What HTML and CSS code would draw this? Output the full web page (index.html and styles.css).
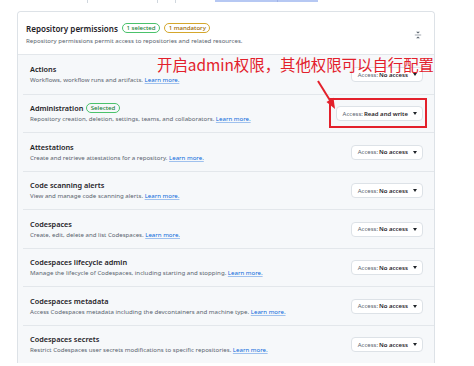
FILE: index.html
```html
<!DOCTYPE html>
<html lang="en">
<head>
<meta charset="utf-8">
<title>Repository permissions</title>
<link rel="stylesheet" href="styles.css">
</head>
<body>
<div class="topstrip">
  <span class="tick t1"></span>
  <span class="tick t2"></span>
  <span class="tick t3"></span>
  <span class="bluebar"><span class="bluediv"></span></span>
</div>
<div class="panel">
  <div class="panel-header">
    <div class="head-text">
      <div class="head-title">
        <span class="title-main">Repository permissions</span>
        <span class="badge badge-green">1 selected</span>
        <span class="badge badge-orange">1 mandatory</span>
      </div>
      <div class="head-desc">Repository permissions permit access to repositories and related resources.</div>
    </div>
    <svg class="fold" viewBox="0 0 10 12" width="8" height="10" aria-hidden="true">
      <path d="M5 4.2 L2.6 1.8 H7.4 Z" fill="#59636e"/>
      <rect x="1" y="5.5" width="8" height="1" fill="#8c959f"/>
      <path d="M5 7.8 L2.6 10.2 H7.4 Z" fill="#59636e"/>
    </svg>
  </div>
  <div class="rows">
    <div class="row">
      <div class="row-text">
        <div class="row-title">Actions</div>
        <div class="row-desc">Workflows, workflow runs and artifacts. <a class="learn">Learn more.</a></div>
      </div>
      <div class="select"><span class="lbl">Access:</span> <b>No access</b><span class="caret"></span></div>
    </div>
    <div class="row">
      <div class="row-text">
        <div class="row-title">Administration <span class="badge badge-green sel">Selected</span></div>
        <div class="row-desc">Repository creation, deletion, settings, teams, and collaborators. <a class="learn">Learn more.</a></div>
      </div>
      <div class="select"><span class="lbl">Access:</span> <b>Read and write</b><span class="caret"></span></div>
    </div>
    <div class="row">
      <div class="row-text">
        <div class="row-title">Attestations</div>
        <div class="row-desc">Create and retrieve attestations for a repository. <a class="learn">Learn more.</a></div>
      </div>
      <div class="select"><span class="lbl">Access:</span> <b>No access</b><span class="caret"></span></div>
    </div>
    <div class="row">
      <div class="row-text">
        <div class="row-title">Code scanning alerts</div>
        <div class="row-desc">View and manage code scanning alerts. <a class="learn">Learn more.</a></div>
      </div>
      <div class="select"><span class="lbl">Access:</span> <b>No access</b><span class="caret"></span></div>
    </div>
    <div class="row">
      <div class="row-text">
        <div class="row-title">Codespaces</div>
        <div class="row-desc">Create, edit, delete and list Codespaces. <a class="learn">Learn more.</a></div>
      </div>
      <div class="select"><span class="lbl">Access:</span> <b>No access</b><span class="caret"></span></div>
    </div>
    <div class="row">
      <div class="row-text">
        <div class="row-title">Codespaces lifecycle admin</div>
        <div class="row-desc">Manage the lifecycle of Codespaces, including starting and stopping. <a class="learn">Learn more.</a></div>
      </div>
      <div class="select"><span class="lbl">Access:</span> <b>No access</b><span class="caret"></span></div>
    </div>
    <div class="row">
      <div class="row-text">
        <div class="row-title">Codespaces metadata</div>
        <div class="row-desc">Access Codespaces metadata including the devcontainers and machine type. <a class="learn">Learn more.</a></div>
      </div>
      <div class="select"><span class="lbl">Access:</span> <b>No access</b><span class="caret"></span></div>
    </div>
    <div class="row">
      <div class="row-text">
        <div class="row-title">Codespaces secrets</div>
        <div class="row-desc">Restrict Codespaces user secrets modifications to specific repositories. <a class="learn">Learn more.</a></div>
      </div>
      <div class="select"><span class="lbl">Access:</span> <b>No access</b><span class="caret"></span></div>
    </div>
  </div>
</div>

<div class="note">开启admin权限，其他权限可以自行配置</div>
<svg class="arrow" width="474" height="366" viewBox="0 0 474 366" aria-hidden="true">
  <line x1="318" y1="81" x2="331" y2="102" stroke="#e3202b" stroke-width="2"/>
  <path d="M335 109 L326.5 102 L333.5 97.8 Z" fill="#e3202b"/>
</svg>
<div class="redbox"></div>
</body>
</html>
```
FILE: styles.css
```css
html, body {
  margin: 0;
  padding: 0;
  background: #ffffff;
}
body {
  width: 474px;
  height: 366px;
  overflow: hidden;
  position: relative;
  font-family: "Noto Sans", "Open Sans", sans-serif;
  color: #1f2328;
}
.topstrip {
  height: 3px;
  display: flex;
  align-items: flex-start;
}
.tick {
  display: block;
  width: 1px;
  height: 3px;
  background: #d0d7de;
}
.t1 { margin-left: 87px; }
.t2 { margin-left: 69px; }
.t3 { margin-left: 17px; }
.bluebar {
  display: block;
  margin-left: 39px;
  width: 103px;
  height: 2px;
  background: #b6c8f3;
  position: relative;
}
.bluediv {
  position: absolute;
  left: 62px;
  top: 0;
  width: 1px;
  height: 2px;
  background: #9fb3e6;
}
.panel {
  margin: 8px 0 0 17px;
  width: 416px;
  border: 1px solid #dde2e7;
  border-bottom: none;
  border-radius: 4px 4px 0 0;
}
.panel-header {
  height: 42px;
  display: flex;
  align-items: center;
  padding: 0 12px 0 8px;
  border-bottom: 1px solid #e3e7eb;
  background: #ffffff;
  border-radius: 4px 4px 0 0;
}
.head-text {
  flex: 1;
  padding-top: 1px;
}
.head-title {
  display: flex;
  align-items: center;
  gap: 4px;
  height: 12px;
}
.title-main {
  font-size: 8.05px;
  font-weight: 600;
  color: #1f2328;
}
.head-desc {
  margin-top: 2px;
  font-size: 6.1px;
  line-height: 9px;
  color: #59636e;
  white-space: nowrap;
}
.badge {
  display: inline-block;
  font-size: 6.1px;
  line-height: 8px;
  padding: 0 3.5px;
  border-radius: 6px;
  border: 1px solid;
  font-weight: 500;
}
.badge-green {
  color: #1a7f37;
  border-color: #4ac26b;
}
.badge-orange {
  color: #9a6700;
  border-color: #d4a72c;
}
.fold {
  display: block;
  margin-top: 4px;
}
.rows {
  background: #f6f8fa;
  padding-left: 5px;
}
.row {
  height: 38.5px;
  box-sizing: border-box;
  border-top: 1px solid #e3e7eb;
  display: flex;
  align-items: center;
  padding: 0 11px 0 7px;
}
.row:first-child {
  border-top: none;
}
.row-text {
  flex: 1;
  padding-top: 1px;
}
.row-title {
  font-size: 7.3px;
  line-height: 11px;
  font-weight: 600;
  color: #1f2328;
  white-space: nowrap;
}
.sel {
  margin-left: 1px;
  vertical-align: 1px;
}
.row-desc {
  font-size: 6.1px;
  line-height: 10px;
  color: #59636e;
  white-space: nowrap;
}
.learn {
  color: #0969da;
  text-decoration: underline;
  text-decoration-color: #9fc1ee;
  text-underline-offset: 1px;
}
.select {
  display: flex;
  align-items: center;
  height: 15px;
  box-sizing: border-box;
  padding: 0 5px 0 6px;
  background: #ffffff;
  border: 1px solid #dde2e7;
  border-radius: 4px;
  font-size: 6px;
  white-space: nowrap;
  margin-top: 1px;
}
.select .lbl {
  color: #59636e;
  margin-right: 1px;
}
.select b {
  font-weight: 600;
  color: #1f2328;
}
.caret {
  display: block;
  margin-left: 5px;
  width: 0;
  height: 0;
  border-left: 2.5px solid transparent;
  border-right: 2.5px solid transparent;
  border-top: 3px solid #1f2328;
}
.note {
  position: absolute;
  left: 157px;
  top: 53px;
  font-family: "Noto Sans CJK SC", "Noto Sans", sans-serif;
  font-size: 15.4px;
  line-height: 22px;
  color: #e3202b;
  white-space: nowrap;
}
.arrow {
  position: absolute;
  left: 0;
  top: 0;
}
.redbox {
  position: absolute;
  left: 329px;
  top: 98px;
  width: 94px;
  height: 26px;
  border: 2px solid #e3202b;
}
```
